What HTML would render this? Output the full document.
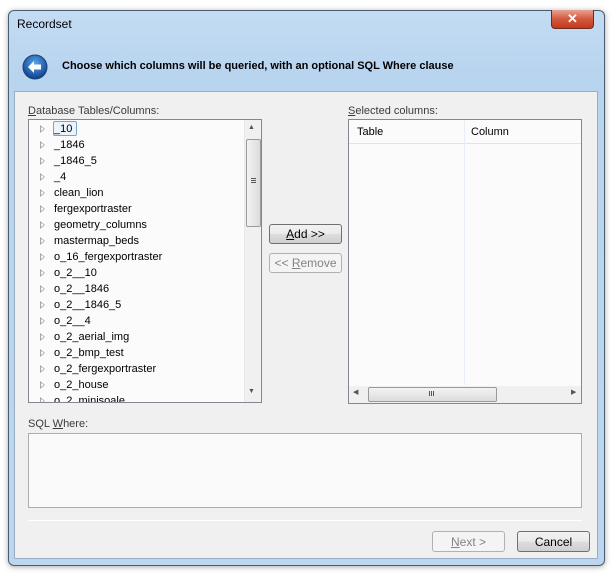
<!DOCTYPE html><html><head><style>
*{margin:0;padding:0;box-sizing:border-box}
body{width:612px;height:576px;background:#fff;font-family:"Liberation Sans",sans-serif;font-size:11px;color:#000;position:relative;overflow:hidden}
.a{position:absolute}
.win{left:8px;top:10px;width:597px;height:556px;border:1px solid #4a5c70;border-radius:6px;background:linear-gradient(#c3dcf3,#b9d4ef 60px,#bcd6f0);box-shadow:0 1px 6px rgba(0,0,0,.35)}
.panel{left:14px;top:91px;width:584px;height:468px;background:#f0f0f0;border:1px solid #9aacc2}
.lb{background:#fbfbfb;border:1px solid #828790}
.btn{border:1px solid #707070;border-radius:3px;background:linear-gradient(#f2f2f2,#ebebeb 50%,#dddddd 51%,#cfcfcf);text-align:center;line-height:19px;font-size:12px}
.dis{border-color:#adb2b5;background:#f4f4f4;color:#838383}
u{text-decoration:underline}
.it{position:absolute;left:25px;font-size:11px;height:16px;line-height:16px}
.tri{position:absolute;left:11px;width:0;height:0;border-left:5px solid #a6a6a6;border-top:4px solid transparent;border-bottom:4px solid transparent}
.tri:after{content:"";position:absolute;left:-4px;top:-2px;border-left:3px solid #fbfbfb;border-top:2px solid transparent;border-bottom:2px solid transparent}
.lbl{color:#3b3b3b;font-size:11px}
</style></head><body>
<div class="a win"></div>
<div class="a" style="left:17px;top:17px;font-size:12px;color:#000">Recordset</div>
<div class="a" style="left:551px;top:10px;width:43px;height:19px;border:1px solid #6d2a20;border-top:none;border-radius:0 0 4px 4px;background:linear-gradient(#e8a193,#d3593f 50%,#c33a1d);color:#fff;font-weight:bold;text-align:center;line-height:18px;font-size:13px">✕</div>
<svg class="a" style="left:22px;top:54px" width="26" height="26" viewBox="0 0 26 26"><defs><radialGradient id="g" cx="50%" cy="35%" r="65%"><stop offset="0" stop-color="#5aa7ea"/><stop offset="1" stop-color="#0b3e8c"/></radialGradient></defs><circle cx="13" cy="13" r="12" fill="url(#g)" stroke="#1c3f78"/><path d="M6 13 L12 7 L12 10.5 L19 10.5 L19 15.5 L12 15.5 L12 19 Z" fill="#fff"/></svg>
<div class="a" style="left:62px;top:60px;font-size:11px;font-weight:bold">Choose which columns will be queried, with an optional SQL Where clause</div>
<div class="a panel"></div>
<div class="a lbl" style="left:28px;top:105px"><u>D</u>atabase Tables/Columns:</div>
<div class="a lbl" style="left:348px;top:105px"><u>S</u>elected columns:</div>
<div class="a lb" style="left:28px;top:119px;width:234px;height:284px;overflow:hidden">
<div style="position:absolute;left:24px;top:1px;width:24px;height:15px;border:1px solid #7da2ce;border-radius:2px;background:#ebf4fd"></div>
<script>
var n=["_10","_1846","_1846_5","_4","clean_lion","fergexportraster","geometry_columns","mastermap_beds","o_16_fergexportraster","o_2__10","o_2__1846","o_2__1846_5","o_2__4","o_2_aerial_img","o_2_bmp_test","o_2_fergexportraster","o_2_house","o_2_minisoale"];
for(var i=0;i<n.length;i++){var t=1+i*16;document.write('<div class="tri" style="top:'+(t+4)+'px"></div><div class="it" style="top:'+t+'px">'+n[i]+'</div>');}
</script>
<div style="position:absolute;right:0;top:0;width:17px;height:282px;background:#f0f0f0;border-left:1px solid #e8e8e8">
<div style="position:absolute;left:3px;top:4px;font-size:7px;color:#555">▲</div>
<div style="position:absolute;left:1px;top:19px;width:15px;height:88px;border:1px solid #9a9a9a;border-radius:2px;background:linear-gradient(90deg,#f3f3f3,#dcdcdc)"></div>
<div style="position:absolute;left:6px;top:58px;width:5px;height:5px;border-top:1px solid #555;border-bottom:1px solid #555"></div>
<div style="position:absolute;left:6px;top:60px;width:5px;height:1px;background:#555"></div>
<div style="position:absolute;left:3px;top:268px;font-size:7px;color:#555">▼</div></div>
</div>
<div class="a btn" style="left:269px;top:224px;width:73px;height:20px"><u>A</u>dd &gt;&gt;</div>
<div class="a btn dis" style="left:269px;top:253px;width:73px;height:20px">&lt;&lt; <u>R</u>emove</div>
<div class="a lb" style="left:348px;top:119px;width:234px;height:285px">
<div style="position:absolute;left:0;top:0;width:232px;height:24px;border-bottom:1px solid #e0e4ea;background:#fbfbfb"></div>
<div class="a" style="left:8px;top:6px;font-size:11px">Table</div>
<div class="a" style="left:115px;top:0;width:1px;height:265px;background:#e8eef6"></div>
<div class="a" style="left:122px;top:6px;font-size:11px">Column</div>
<div style="position:absolute;left:0;bottom:0;width:232px;height:17px;background:#f0f0f0">
<div class="a" style="left:4px;top:2px;font-size:7px;color:#555">◀</div>
<div class="a" style="left:19px;top:1px;width:129px;height:15px;border:1px solid #9a9a9a;border-radius:2px;background:linear-gradient(#f3f3f3,#dcdcdc)"></div>
<div class="a" style="left:80px;top:5px;width:5px;height:5px;border-left:1px solid #555;border-right:1px solid #555"></div>
<div class="a" style="left:82px;top:5px;width:1px;height:5px;background:#555"></div>
<div class="a" style="left:222px;top:2px;font-size:7px;color:#555">▶</div></div>
</div>
<div class="a lbl" style="left:28px;top:418px">SQL <u>W</u>here:</div>
<div class="a" style="left:28px;top:433px;width:554px;height:75px;border:1px solid #abadb3;background:#fafafa"></div>
<div class="a" style="left:28px;top:520px;width:554px;height:1px;background:#a0a0a0;border-bottom:1px solid #fff"></div>
<div class="a btn dis" style="left:432px;top:531px;width:73px;height:21px;line-height:20px"><u>N</u>ext &gt;</div>
<div class="a btn" style="left:517px;top:531px;width:73px;height:21px;line-height:20px">Cancel</div>
</body></html>
